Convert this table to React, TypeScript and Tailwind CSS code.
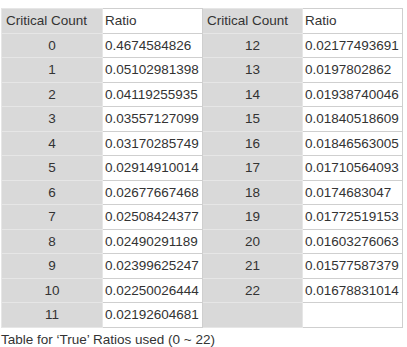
import React from "react";

const left: [number, string][] = [
  [0, "0.4674584826"],
  [1, "0.05102981398"],
  [2, "0.04119255935"],
  [3, "0.03557127099"],
  [4, "0.03170285749"],
  [5, "0.02914910014"],
  [6, "0.02677667468"],
  [7, "0.02508424377"],
  [8, "0.02490291189"],
  [9, "0.02399625247"],
  [10, "0.02250026444"],
  [11, "0.02192604681"],
];
const right: [number, string][] = [
  [12, "0.02177493691"],
  [13, "0.0197802862"],
  [14, "0.01938740046"],
  [15, "0.01840518609"],
  [16, "0.01846563005"],
  [17, "0.01710564093"],
  [18, "0.0174683047"],
  [19, "0.01772519153"],
  [20, "0.01603276063"],
  [21, "0.01577587379"],
  [22, "0.01678831014"],
];

const gray = "bg-[#d9d9d9] border border-[#e6e6e6] text-center font-normal";
const white = "bg-white border border-[#cfcfcf] text-left pl-[2px] font-normal";

export default function App() {
  return (
    <div
      className="w-[407px] h-[347px] bg-white text-[#333] text-[13.5px] font-normal pt-[8px] pl-[1px]"
      style={{ fontFamily: '"Liberation Sans", Arial, sans-serif' }}
    >
      <table className="border-collapse table-fixed w-[401px] leading-none">
        <colgroup>
          <col className="w-[101px]" />
          <col className="w-[100px]" />
          <col className="w-[100px]" />
          <col className="w-[100px]" />
        </colgroup>
        <tbody>
          <tr className="h-[24.5px]">
            <td className={gray + " !text-left pl-[4px]"}>Critical Count</td>
            <td className={white}>Ratio</td>
            <td className={gray + " !text-left pl-[4px]"}>Critical Count</td>
            <td className={white}>Ratio</td>
          </tr>
          {left.map((l, i) => {
            const r = right[i];
            return (
              <tr key={i} className="h-[24.5px]">
                <td className={gray}>{l[0]}</td>
                <td className={white}>{l[1]}</td>
                <td className={gray}>{r ? r[0] : ""}</td>
                <td className={white}>{r ? r[1] : ""}</td>
              </tr>
            );
          })}
        </tbody>
      </table>
      <div className="mt-[5px] leading-none">Table for ‘True’ Ratios used (0 ~ 22)</div>
    </div>
  );
}
